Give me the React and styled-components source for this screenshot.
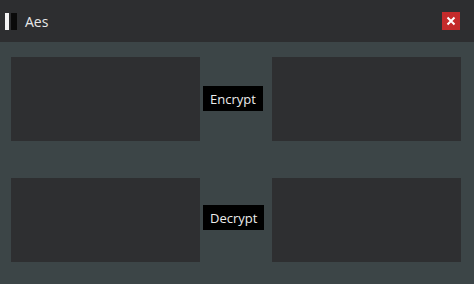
import React from 'react';
import styled, { createGlobalStyle } from 'styled-components';

const GlobalStyle = createGlobalStyle`
  html, body {
    margin: 0;
    padding: 0;
    background: #3c4547;
  }
  body {
    font-family: "Open Sans", "Noto Sans", sans-serif;
  }
`;

const Window = styled.div`
  width: 474px;
  height: 284px;
  display: flex;
  flex-direction: column;
  background: #3c4547;
  overflow: hidden;
`;

const TitleBar = styled.div`
  height: 42px;
  flex: none;
  display: flex;
  align-items: center;
  padding: 0 14px 0 5px;
  background: #2d2e30;
  color: #e8e8e8;
`;

const AppIcon = styled.svg`
  width: 13px;
  height: 17px;
  margin-right: 7px;
  margin-top: 1px;
`;

const Title = styled.span`
  font-size: 14px;
  flex: 1;
  margin-top: 1px;
`;

const CloseButton = styled.button`
  width: 18px;
  height: 18px;
  padding: 0;
  border: none;
  background: #c42b2b;
  display: flex;
  align-items: center;
  justify-content: center;
  margin-top: -1px;
`;

const Body = styled.div`
  display: grid;
  grid-template-columns: 189px 72px 189px;
  grid-template-rows: 84px 84px;
  row-gap: 37px;
  padding: 15px 13px 0 11px;
`;

const Pane = styled.div`
  background: #2e2f31;
`;

const ActionButton = styled.button`
  justify-self: start;
  align-self: center;
  margin-left: 3px;
  margin-top: ${p => p.$nudge || 0}px;
  height: 25px;
  padding: 0 7px;
  border: none;
  background: #000;
  color: #ececec;
  font-family: "Open Sans", "Noto Sans", sans-serif;
  font-size: 13px;
`;

export default function App() {
  return (
    <>
      <GlobalStyle />
      <Window>
        <TitleBar>
          <AppIcon viewBox="0 0 13 17">
            <rect x="0" y="0" width="4" height="17" fill="#f4f4f4" />
            <rect x="6" y="0" width="6" height="17" fill="#0a0a0a" />
          </AppIcon>
          <Title>Aes</Title>
          <CloseButton aria-label="Close">
            <svg width="10" height="10" viewBox="0 0 10 10">
              <path d="M1.5 1.5 L8.5 8.5 M8.5 1.5 L1.5 8.5" stroke="#fff" strokeWidth="2" />
            </svg>
          </CloseButton>
        </TitleBar>
        <Body>
          <Pane />
          <ActionButton $nudge={-1}>Encrypt</ActionButton>
          <Pane />
          <Pane />
          <ActionButton $nudge={-5}>Decrypt</ActionButton>
          <Pane />
        </Body>
      </Window>
    </>
  );
}
